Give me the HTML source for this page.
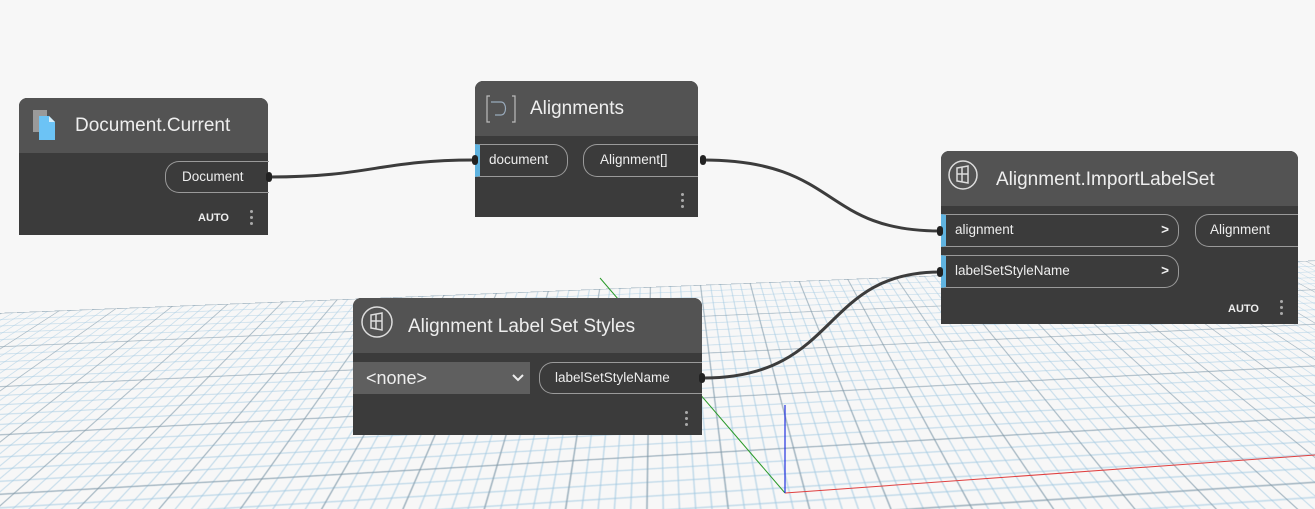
<!DOCTYPE html>
<html><head><style>
body{margin:0;width:1315px;height:509px;overflow:hidden;background:#f7f7f7;font-family:"Liberation Sans",sans-serif;position:relative}
.gridwrap{position:absolute;left:0;top:0;width:1315px;height:509px;perspective:600px;perspective-origin:700px 120px;overflow:hidden}
.plane{position:absolute;left:-1400px;top:285px;width:4200px;height:1600px;transform-origin:50% 0;transform:rotateX(72deg) rotateZ(-4deg);
background-image:
linear-gradient(to right,rgba(130,145,155,.55) 1px,transparent 1px),
linear-gradient(to bottom,rgba(130,145,155,.55) 1px,transparent 1px),
linear-gradient(to right,rgba(160,200,225,.6) 1px,transparent 1px),
linear-gradient(to bottom,rgba(160,200,225,.6) 1px,transparent 1px);
background-size:50px 50px,50px 50px,10px 10px,10px 10px}
.node{position:absolute;background:#3b3b3b;border-radius:8px 8px 0 0;color:#eee}
.hdr{position:absolute;left:0;top:0;right:0;background:#535353;border-radius:8px 8px 0 0}
.title{position:absolute;font-size:19px;color:#eee}
.pill{position:absolute;border:1px solid #9a9a9a;border-radius:14px;font-size:13.5px;color:#eee;box-sizing:border-box;line-height:30px}
.pin{border-left:5px solid #5fb3e0;border-radius:0 14px 14px 0;border-left-color:#5fb3e0}
.auto{position:absolute;font-size:11px;font-weight:bold;color:#eee}
.dots{position:absolute;width:3px}
.dots i{display:block;width:3px;height:3px;background:#aaa;border-radius:50%;margin-bottom:3px}
.conn{position:absolute;width:6px;height:10px;background:#222;border-radius:5px}
</style></head><body>
<div class="gridwrap"><div class="plane"></div></div>
<svg width="1315" height="509" style="position:absolute;left:0;top:0">
<line x1="600" y1="278" x2="785" y2="493" stroke="#2a9a2a" stroke-width="1"/>
<line x1="785" y1="493" x2="1315" y2="455" stroke="#e04040" stroke-width="1"/>
<line x1="785" y1="405" x2="785" y2="493" stroke="#2030e0" stroke-width="1.2"/>
<g fill="none" stroke="#3c3c3c" stroke-width="3">
<path d="M270 177 C370 177 380 160 474 160"/>
<path d="M703 160 C840 160 820 231 940 231"/>
<path d="M703 378 C840 378 820 272 940 272"/>
</g>
</svg>

<div class="node" style="left:19px;top:98px;width:249px;height:137px">
<div class="hdr" style="height:55px"></div>
<svg style="position:absolute;left:14px;top:12px" width="28" height="32"><rect x="0" y="0" width="14" height="22" fill="#9a9a9a"/><path d="M6 6 H16 L22 12 V30 H6Z" fill="#6cc3f5"/><path d="M16 6 V12 H22" fill="#d8eef9"/></svg>
<div class="title" style="left:56px;top:17px">Document.Current</div>
<div class="pill" style="left:146px;top:63px;width:104px;height:32px;border-right:none;border-radius:14px 0 0 14px;padding-left:16px">Document</div>
<div class="auto" style="left:179px;top:114px">AUTO</div>
<div class="dots" style="left:231px;top:112px"><i></i><i></i><i></i></div>
</div>
<div class="conn" style="left:266px;top:172px"></div>

<div class="node" style="left:475px;top:81px;width:223px;height:136px">
<div class="hdr" style="height:55px"></div>
<svg style="position:absolute;left:10px;top:12px" width="32" height="32" fill="none" stroke="#bbb" stroke-width="1.2"><path d="M5 3 H2 V29 H5 M27 3 H30 V29 H27"/><path d="M6 9 H16 C22 9 22 22 16 22 H10" stroke="#9ab"/></svg>
<div class="title" style="left:55px;top:17px">Alignments</div>
<div class="pill pin" style="left:0;top:63px;width:93px;height:33px;padding-left:9px">document</div>
<div class="pill" style="left:108px;top:63px;width:115px;height:33px;border-right:none;border-radius:14px 0 0 14px;padding-left:16px">Alignment[]</div>
<div class="dots" style="left:206px;top:112px"><i></i><i></i><i></i></div>
</div>
<div class="conn" style="left:472px;top:155px"></div>
<div class="conn" style="left:700px;top:155px"></div>

<div class="node" style="left:941px;top:151px;width:357px;height:173px">
<div class="hdr" style="height:55px"></div>
<svg style="position:absolute;left:6px;top:8px" width="32" height="32" fill="none" stroke="#ddd" stroke-width="1.5"><circle cx="16" cy="16" r="14"/><path d="M10 9 L21 7 V24 L10 22Z M10 15 H21 M15 8 V23"/></svg>
<div class="title" style="left:55px;top:18px">Alignment.ImportLabelSet</div>
<div class="pill pin" style="left:0;top:63px;width:238px;height:33px;padding-left:9px">alignment<span style="position:absolute;right:9px;font-weight:bold">&gt;</span></div>
<div class="pill" style="left:254px;top:63px;width:103px;height:33px;border-right:none;border-radius:14px 0 0 14px;padding-left:14px">Alignment</div>
<div class="pill pin" style="left:0;top:104px;width:238px;height:33px;padding-left:9px">labelSetStyleName<span style="position:absolute;right:9px;font-weight:bold">&gt;</span></div>
<div class="auto" style="left:287px;top:152px">AUTO</div>
<div class="dots" style="left:339px;top:149px"><i></i><i></i><i></i></div>
</div>
<div class="conn" style="left:937px;top:226px"></div>
<div class="conn" style="left:937px;top:267px"></div>

<div class="node" style="left:353px;top:298px;width:349px;height:137px">
<div class="hdr" style="height:55px"></div>
<svg style="position:absolute;left:7px;top:7px" width="34" height="34" fill="none" stroke="#ddd" stroke-width="1.5"><circle cx="17" cy="17" r="15"/><path d="M11 10 L22 8 V25 L11 23Z M11 16 H22 M16 9 V24"/></svg>
<div class="title" style="left:55px;top:18px">Alignment Label Set Styles</div>
<div style="position:absolute;left:0;top:64px;width:177px;height:32px;background:#5f5f5f;font-size:18px;line-height:32px;padding-left:13px;box-sizing:border-box;color:#eee">&lt;none&gt;<svg style="position:absolute;right:6px;top:12px" width="12" height="8" fill="none" stroke="#eee" stroke-width="2"><path d="M1 1 L6 6 L11 1"/></svg></div>
<div class="pill" style="left:186px;top:64px;width:163px;height:32px;border-right:none;border-radius:14px 0 0 14px;padding-left:15px">labelSetStyleName</div>
<div class="dots" style="left:332px;top:113px"><i></i><i></i><i></i></div>
</div>
<div class="conn" style="left:699px;top:373px"></div>
</body></html>
